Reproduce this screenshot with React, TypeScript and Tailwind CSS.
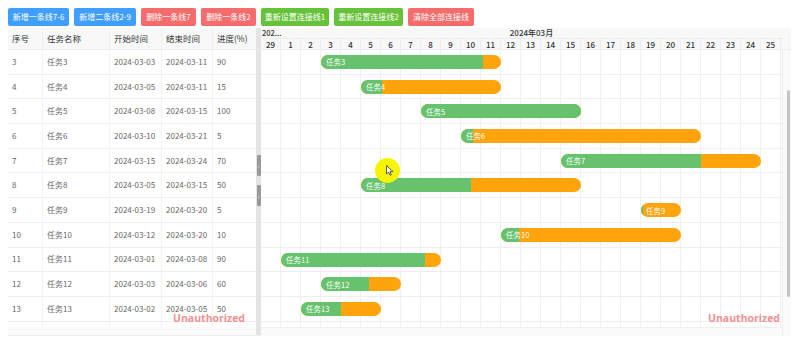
import React from 'react';

type Task = { id: number; name: string; start: string; end: string; progress: number };

const tasks: Task[] = [
  { id: 3, name: '任务3', start: '2024-03-03', end: '2024-03-11', progress: 90 },
  { id: 4, name: '任务4', start: '2024-03-05', end: '2024-03-11', progress: 15 },
  { id: 5, name: '任务5', start: '2024-03-08', end: '2024-03-15', progress: 100 },
  { id: 6, name: '任务6', start: '2024-03-10', end: '2024-03-21', progress: 5 },
  { id: 7, name: '任务7', start: '2024-03-15', end: '2024-03-24', progress: 70 },
  { id: 8, name: '任务8', start: '2024-03-05', end: '2024-03-15', progress: 50 },
  { id: 9, name: '任务9', start: '2024-03-19', end: '2024-03-20', progress: 5 },
  { id: 10, name: '任务10', start: '2024-03-12', end: '2024-03-20', progress: 10 },
  { id: 11, name: '任务11', start: '2024-03-01', end: '2024-03-08', progress: 90 },
  { id: 12, name: '任务12', start: '2024-03-03', end: '2024-03-06', progress: 60 },
  { id: 13, name: '任务13', start: '2024-03-02', end: '2024-03-05', progress: 50 },
];

const days = [29, ...Array.from({ length: 25 }, (_, i) => i + 1)];
const DAY_W = 20;

// column index of a March date (column 0 is Feb 29)
const dayIdx = (d: string) => Number(d.slice(8, 10));

const buttons = [
  { label: '新增一条线7-6', cls: 'bg-[#409eff] w-[61px]' },
  { label: '新增二条线2-9', cls: 'bg-[#409eff] w-[62px]' },
  { label: '删除一条线7', cls: 'bg-[#f56c6c] w-[55px]' },
  { label: '删除一条线2', cls: 'bg-[#f56c6c] w-[55px]' },
  { label: '重新设置连接线1', cls: 'bg-[#67c23a] w-[68px]' },
  { label: '重新设置连接线2', cls: 'bg-[#67c23a] w-[69px]' },
  { label: '清除全部连接线', cls: 'bg-[#f56c6c] w-[66px]' },
];

const cols = [
  { key: 'id', title: '序号', w: 'w-[35px]' },
  { key: 'name', title: '任务名称', w: 'w-[67px]' },
  { key: 'start', title: '开始时间', w: 'w-[52px]' },
  { key: 'end', title: '结束时间', w: 'w-[51px]' },
  { key: 'progress', title: '进度(%)', w: 'w-[43px]' },
] as const;

const font = { fontFamily: '"Noto Sans CJK SC", "Noto Sans", sans-serif' };

const App: React.FC = () => {
  return (
    <div className="relative w-[800px] h-[343px] bg-white overflow-hidden text-[#333]" style={font}>
      {/* toolbar */}
      <div className="flex gap-[5px] pl-[8px] pt-[8px]">
        {buttons.map((b) => (
          <div
            key={b.label}
            className={`h-[18px] rounded-[2px] text-white text-[8px] flex items-center justify-center ${b.cls}`}
          >
            {b.label}
          </div>
        ))}
      </div>

      <div className="flex ml-[8px] mt-[2px] w-[783px] h-[308px] border-b border-[#eee]">
        {/* table */}
        <div className="w-[248px] flex flex-col">
          <div className="flex h-[22px] bg-[#f8f8f9] border-b border-[#eee] text-[8.5px] text-[#333]">
            {cols.map((c) => (
              <div key={c.key} className={`${c.w} pl-[4px] flex items-center border-r border-[#f0f0f0] last:border-r-0`}>
                {c.title}
              </div>
            ))}
          </div>
          <div className="flex-1 overflow-hidden">
            {tasks.map((t) => (
              <div key={t.id} className="flex h-[24.7px] border-b border-[#eee] text-[8px] text-[#666]">
                {cols.map((c) => (
                  <div key={c.key} className={`${c.w} pl-[4px] flex items-center border-r border-[#f3f3f3] last:border-r-0`}>
                    {String(t[c.key])}
                  </div>
                ))}
              </div>
            ))}
            <div className="flex h-[6px] border-b border-[#eee]">
              {cols.map((c) => (
                <div key={c.key} className={`${c.w} border-r border-[#f3f3f3] last:border-r-0`} />
              ))}
            </div>
          </div>
          <div className="h-[8px] bg-[#fafafa]" />
        </div>

        {/* splitter */}
        <div className="w-[5px] bg-[#e4e4e4] flex flex-col items-center pt-[127px] gap-[9px]">
          <div className="w-[4px] h-[21px] bg-[#9a9a9a] rounded-[1px] text-white text-[5px] flex items-center justify-center">‹</div>
          <div className="w-[4px] h-[21px] bg-[#9a9a9a] rounded-[1px] text-white text-[5px] flex items-center justify-center">›</div>
        </div>

        {/* gantt */}
        <div className="flex-1 flex flex-col">
          <div className="h-[22px] bg-[#f8f8f9] border-b border-[#eee] flex">
            <div className="w-[521px] flex flex-col">
              <div className="flex h-[10px] text-[8px] font-medium leading-[10px]">
                <div className="w-[20px] pl-[1px] text-[7.5px] whitespace-nowrap">202...</div>
                <div className="flex-1 text-center">2024年03月</div>
              </div>
              <div className="flex flex-1 border-t border-[#eee] text-[8px] font-medium">
                {days.map((d, i) => (
                  <div key={i} className="w-[20px] flex items-center justify-center border-r border-[#eee]">
                    {d}
                  </div>
                ))}
              </div>
            </div>
          </div>
          <div className="flex flex-1">
            <div className="w-[521px] flex flex-col">
              <div className="relative flex-1 overflow-hidden">
                {/* grid columns */}
                <div className="absolute inset-0 flex">
                  {days.map((d, i) => (
                    <div key={i} className="w-[20px] h-full border-r border-[#f0f0f0]" />
                  ))}
                </div>
                {tasks.map((t) => {
                  const s = dayIdx(t.start);
                  const e = dayIdx(t.end) + 1;
                  const w = (e - s) * DAY_W;
                  return (
                    <div key={t.id} className="relative h-[24.7px] border-b border-[#eee]">
                      <div
                        className="absolute top-[5px] h-[14px] rounded-full bg-[#ffa40d] overflow-hidden"
                        style={{ left: s * DAY_W, width: w }}
                      >
                        <div className="absolute inset-y-0 left-0 bg-[#66c26c]" style={{ width: (w * t.progress) / 100 }} />
                        <div className="absolute inset-0 flex items-center pl-[5px] text-white text-[7.5px] whitespace-nowrap">
                          {t.name}
                        </div>
                      </div>
                    </div>
                  );
                })}
                <div className="h-[6px] border-b border-[#eee]" />
              </div>
              <div className="h-[8px] bg-[#fafafa]" />
            </div>
            {/* vertical scrollbar */}
            <div className="flex-1 bg-[#fafafa] border-l border-[#eee] relative">
              <div className="absolute left-[4px] top-[40px] w-[3px] h-[207px] bg-[#c4c4c4] rounded-full" />
            </div>
          </div>
        </div>
      </div>

      {/* watermarks */}
      <div className="absolute left-[173px] top-[311px] text-[10.5px] font-bold text-[#f29191]" style={{ fontFamily: '"Open Sans", sans-serif' }}>
        Unauthorized
      </div>
      <div className="absolute left-[708px] top-[311px] text-[10.5px] font-bold text-[#f29191]" style={{ fontFamily: '"Open Sans", sans-serif' }}>
        Unauthorized
      </div>

      {/* cursor highlight */}
      <div className="absolute left-[375px] top-[158px] w-[25px] h-[25px] rounded-full bg-[#f5f500]" />
      <svg className="absolute left-[386px] top-[165px]" width="8" height="11" viewBox="0 0 8 11">
        <path d="M0.5 0.5 L0.5 9 L2.6 7 L4 10.3 L5.3 9.7 L4 6.6 L7 6.6 Z" fill="#fff" stroke="#333" strokeWidth="0.8" />
      </svg>
    </div>
  );
};

export default App;
